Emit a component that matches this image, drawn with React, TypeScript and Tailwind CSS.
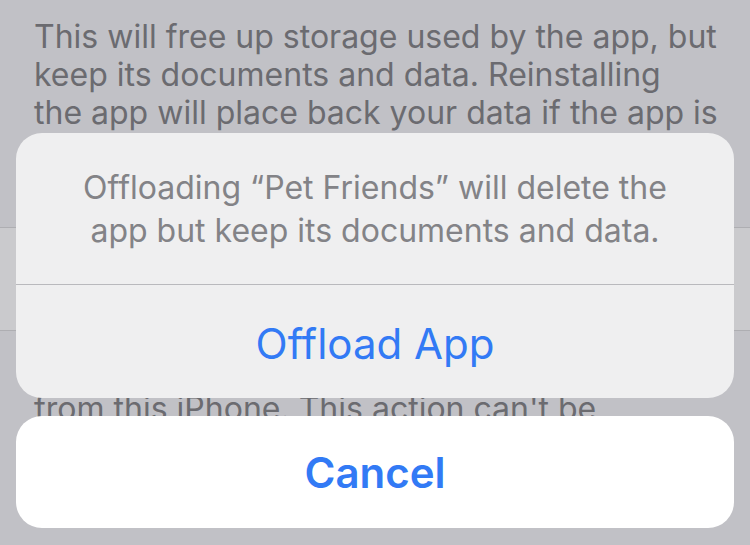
import React from "react";

const font = { fontFamily: "Inter, 'Noto Sans', sans-serif" };

export default function App() {
  return (
    <div
      className="relative w-[750px] h-[545px] overflow-hidden bg-[#c1c1c6]"
      style={font}
    >
      {/* Dimmed settings page underneath */}
      <div className="flex flex-col">
        <p className="pt-[18px] px-[34px] text-[32px] leading-[38px] text-[#6b6b70] whitespace-nowrap">
          This will free up storage used by the app, but
          <br />
          keep its documents and data. Reinstalling
          <br />
          the app will place back your data if the app is
          <br />
          still available in the App Store.
        </p>
        <div className="mt-[57px] h-[104px] border-y border-[#aeaeb2] bg-[#cacacd]" />
        <p className="pt-[21px] px-[34px] text-[32px] leading-[38px] text-[#6b6b70] whitespace-nowrap">
          This will delete the app and all related data
          <br />
          from this iPhone. This action can't be
          <br />
          undone.
        </p>
      </div>

      {/* Action sheet */}
      <div className="absolute left-[16px] right-[16px] top-[133px] flex flex-col gap-[18px]">
        <div className="flex flex-col rounded-[26px] bg-[#efeff0] overflow-hidden">
          <div className="h-[151px] flex items-center justify-center">
            <p className="text-center text-[32px] leading-[43px] text-[#838387] whitespace-nowrap">
              Offloading “Pet Friends” will delete the
              <br />
              app but keep its documents and data.
            </p>
          </div>
          <div className="h-px bg-[#b9b9bd]" />
          <div className="h-[113px] pt-[3px] flex items-center justify-center text-[42px] text-[#327af5]">
            Offload App
          </div>
        </div>
        <div className="h-[112px] rounded-[26px] bg-white flex items-center justify-center text-[42px] font-semibold text-[#327af5]">
          Cancel
        </div>
      </div>
    </div>
  );
}
